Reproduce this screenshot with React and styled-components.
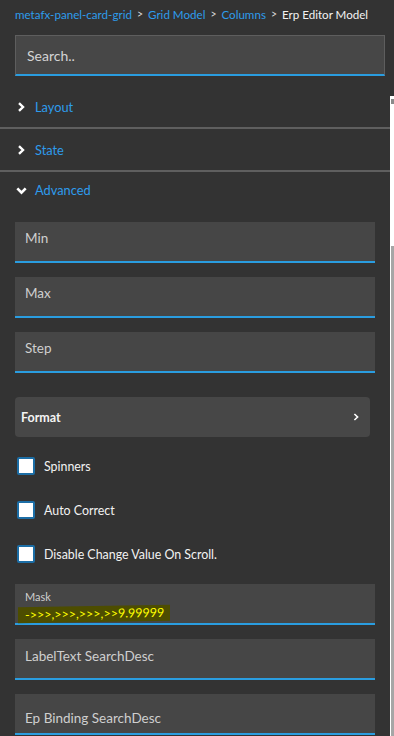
import React from "react";
import styled, { createGlobalStyle } from "styled-components";

const Global = createGlobalStyle`
  html, body { margin: 0; padding: 0; background: #333333; }
  body { font-family: Lato, "Liberation Sans", sans-serif; overflow: hidden; }
  * { box-sizing: border-box; }
`;

const Page = styled.div`
  width: 394px;
  height: 736px;
  background: #333333;
  display: flex;
  flex-direction: column;
  overflow: hidden;
`;

const Header = styled.div`
  padding: 5px 9px 0 15px;
  display: flex;
  flex-direction: column;
`;

const Crumbs = styled.div`
  display: flex;
  align-items: center;
  gap: 5px;
  font-size: 11.6px;
  height: 18px;
  white-space: nowrap;
`;

const Crumb = styled.span`
  color: ${(p) => (p.$current ? "#f2f2f2" : "#2e9cec")};
`;

const Sep = styled.span`
  color: #d8d8d8;
  font-size: 10.5px;
`;

const SearchBox = styled.div`
  margin-top: 12px;
  height: 41px;
  background: #474747;
  border: 1px solid #5e5e5e;
  border-bottom: 2px solid #2a9de0;
  display: flex;
  align-items: center;
  padding-left: 11px;
  color: #d4d4d4;
  font-size: 14px;
`;

const Body = styled.div`
  flex: 1;
  display: flex;
  margin-top: 11px;
  min-height: 0;
`;

const Content = styled.div`
  flex: 1;
  display: flex;
  flex-direction: column;
`;

const Scroll = styled.div`
  width: 4px;
  margin-top: 9px;
  background: #ffffff;
  display: flex;
  flex-direction: column;
  align-items: flex-end;
`;

const ScrollArrow = styled.div`
  width: 3px;
  height: 5px;
  margin-top: 3px;
  background: #8a8a8a;
`;

const ScrollThumb = styled.div`
  margin-top: 142px;
  width: 3px;
  flex: 1;
  background: #a6a6a6;
`;

const Section = styled.div`
  height: ${(p) => p.$h}px;
  flex-shrink: 0;
  display: flex;
  align-items: center;
  padding-left: 16px;
  gap: ${(p) => (p.$open ? 8 : 9)}px;
  color: #2e9cec;
  font-size: 12.8px;
  border-bottom: ${(p) => (p.$divider ? "2px solid #5f5f5f" : "none")};
`;

const Fields = styled.div`
  padding: 14px 15px 0 15px;
  display: flex;
  flex-direction: column;
`;

const Field = styled.div`
  height: 41px;
  flex-shrink: 0;
  margin-top: ${(p) => p.$mt || 0}px;
  margin-bottom: 14px;
  background: #464646;
  border-bottom: 2px solid #2a9de0;
  padding: ${(p) => p.$pt}px 10px 0 10px;
  color: #cfcfcf;
  font-size: 13.5px;
  display: flex;
  flex-direction: column;
`;

const SmallLabel = styled.div`
  font-size: 11px;
  color: #cfcfcf;
  line-height: 13px;
`;

const MaskValue = styled.div`
  margin-top: 3px;
  margin-left: -7px;
  align-self: flex-start;
  background: #4d4d00;
  color: #ffff00;
  font-size: 12.5px;
  line-height: 16px;
  padding: 0 6px 0 7px;
  transform: skewY(-1deg);
`;

const FormatRow = styled.div`
  margin: 10px 5px 0 0;
  height: 40px;
  flex-shrink: 0;
  background: #474747;
  border-radius: 4px;
  display: flex;
  align-items: center;
  justify-content: space-between;
  padding: 0 10px 0 6px;
  color: #f4f4f4;
  font-size: 12.5px;
  font-weight: 700;
`;

const Check = styled.label`
  height: 44px;
  flex-shrink: 0;
  display: flex;
  align-items: center;
  gap: 9px;
  padding-left: 2px;
  color: #f2f2f2;
  font-size: 12.4px;
  &:first-of-type { margin-top: 7px; }
`;

const Box = styled.span`
  width: 18px;
  height: 18px;
  background: #ffffff;
  border: 2px solid #1c6ea6;
  border-radius: 2px;
`;

const Chevron = ({ dir = "right", size = 10, stroke = "#ffffff", width = 2.4 }) => (
  <svg width={size} height={size} viewBox="0 0 10 10">
    {dir === "right" ? (
      <path d="M3 1.2 L7 5 L3 8.8" fill="none" stroke={stroke} strokeWidth={width} />
    ) : (
      <path d="M1.2 3 L5 7 L8.8 3" fill="none" stroke={stroke} strokeWidth={width} />
    )}
  </svg>
);

export default function App() {
  return (
    <Page>
      <Global />
      <Header>
        <Crumbs>
          <Crumb>metafx-panel-card-grid</Crumb>
          <Sep>&gt;</Sep>
          <Crumb>Grid Model</Crumb>
          <Sep>&gt;</Sep>
          <Crumb>Columns</Crumb>
          <Sep>&gt;</Sep>
          <Crumb $current>Erp Editor Model</Crumb>
        </Crumbs>
        <SearchBox>Search..</SearchBox>
      </Header>
      <Body>
        <Content>
          <Section $h={42} $divider>
            <Chevron />
            Layout
          </Section>
          <Section $h={43} $divider>
            <Chevron />
            State
          </Section>
          <Section $h={36} $open>
            <Chevron dir="down" size={11} />
            Advanced
          </Section>
          <Fields>
            <Field $pt={8}>Min</Field>
            <Field $pt={8}>Max</Field>
            <Field $pt={8}>Step</Field>
            <FormatRow>
              Format
              <Chevron size={8} width={2} />
            </FormatRow>
            <Check>
              <Box />
              Spinners
            </Check>
            <Check>
              <Box />
              Auto Correct
            </Check>
            <Check>
              <Box />
              Disable Change Value On Scroll.
            </Check>
            <Field $pt={6} $mt={8}>
              <SmallLabel>Mask</SmallLabel>
              <MaskValue>-&gt;&gt;&gt;,&gt;&gt;&gt;,&gt;&gt;&gt;,&gt;&gt;9.99999</MaskValue>
            </Field>
            <Field $pt={9}>LabelText SearchDesc</Field>
            <Field $pt={16}>Ep Binding SearchDesc</Field>
          </Fields>
        </Content>
        <Scroll>
          <ScrollArrow />
          <ScrollThumb />
        </Scroll>
      </Body>
    </Page>
  );
}
